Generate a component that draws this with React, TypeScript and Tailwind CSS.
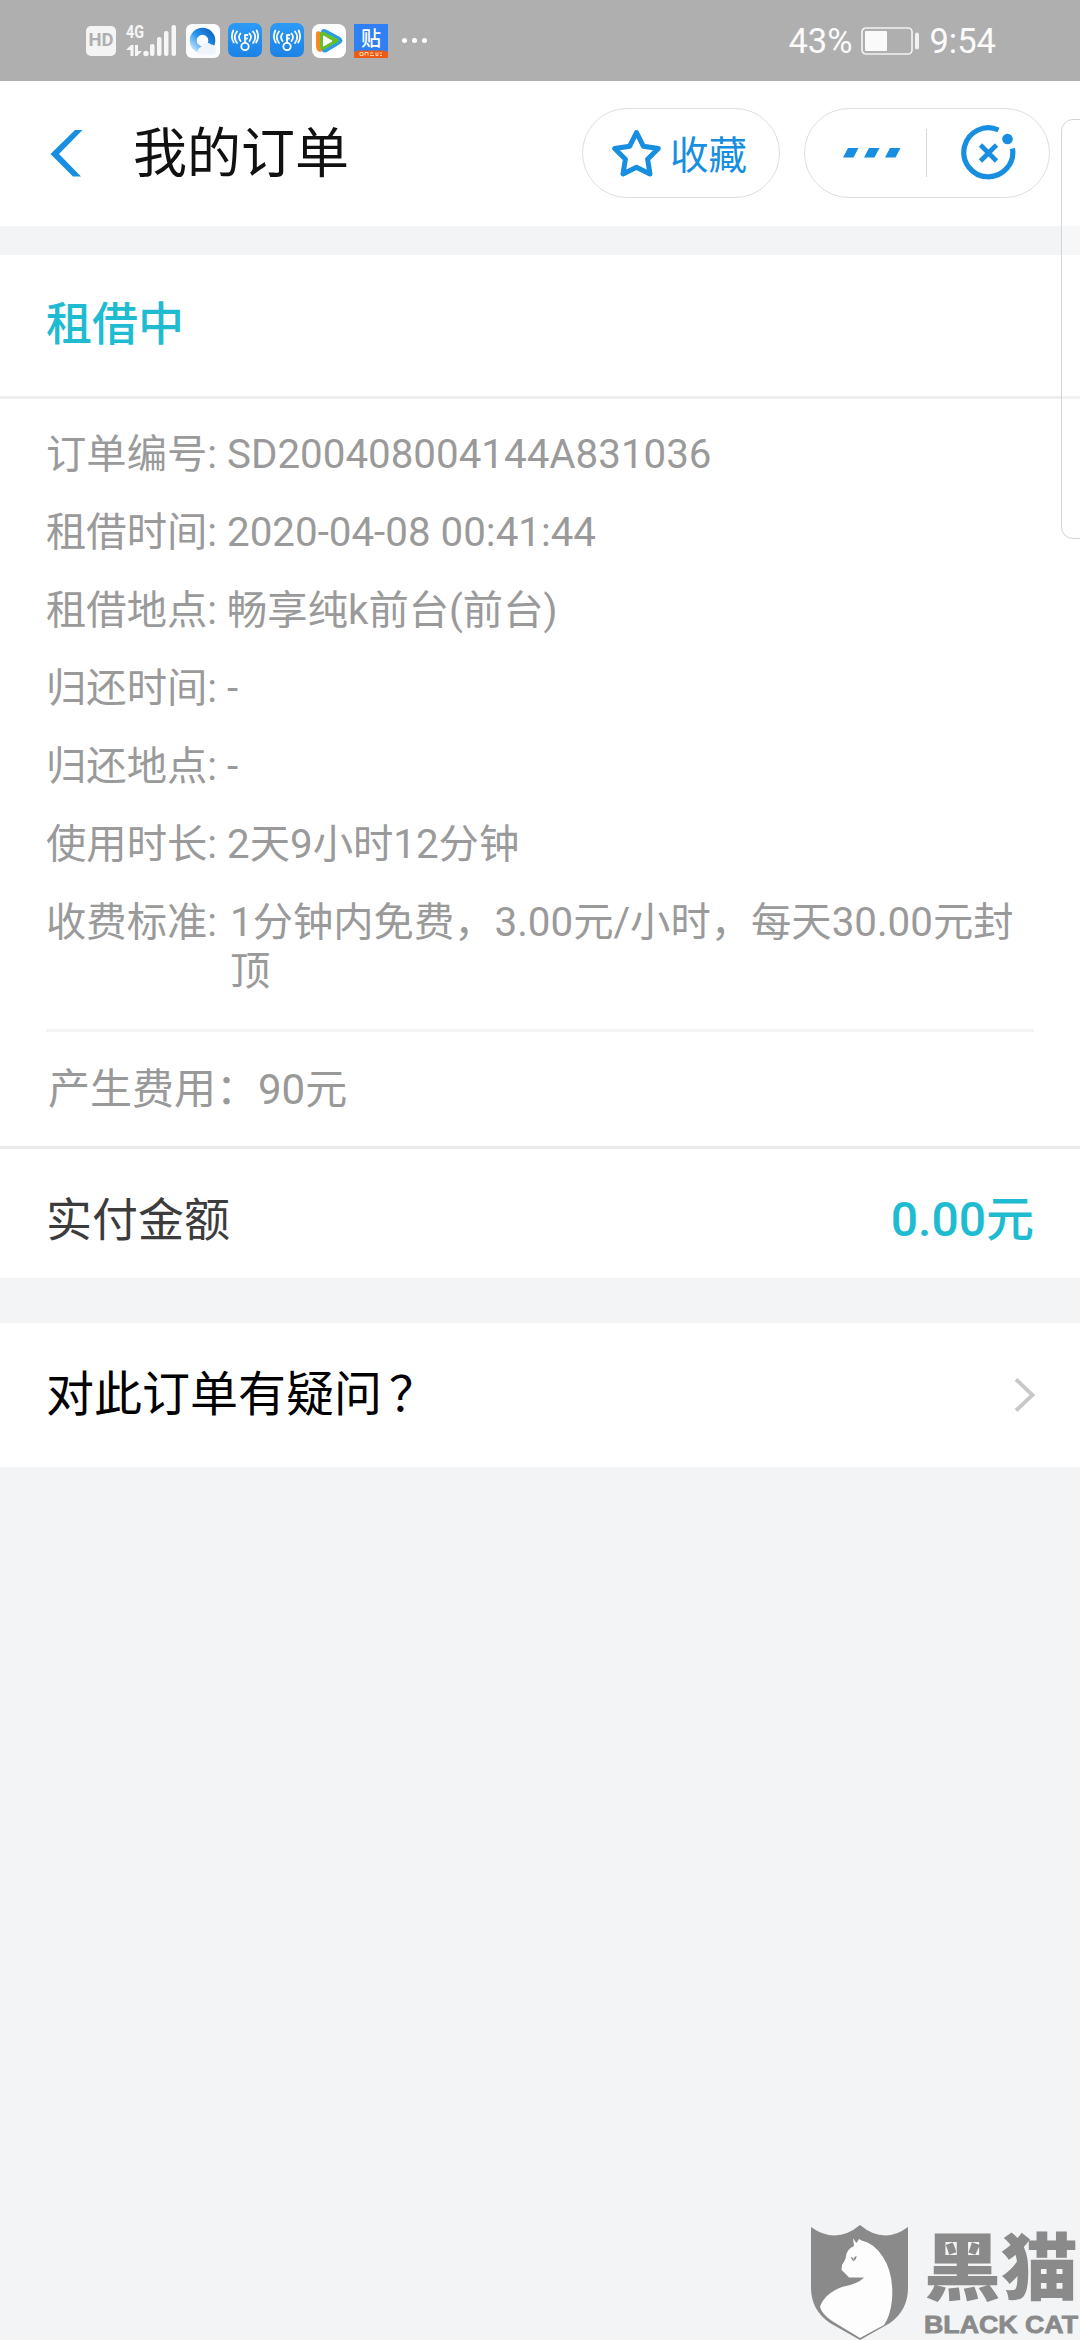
import type { ReactNode } from 'react';

const FONT = "font-['Roboto','Noto_Sans_CJK_SC',sans-serif]";

function SignalIcon() {
  return (
    <svg width="52" height="34" viewBox="0 0 52 34" fill="#f6f6f6" className="overflow-visible">
      <text x="0" y="14" fontFamily="Roboto" fontWeight="700" fontSize="18" textLength="18" lengthAdjust="spacingAndGlyphs">
        4G
      </text>
      <path d="M0 26 L5 21 H7.500 V32 H4.500 V26 Z M9 21 H12 V27 H16 L11 32 H9 Z" />
      <circle cx="20" cy="29.500" r="2.700" />
      <rect x="24" y="20" width="4.500" height="12" rx="2" />
      <rect x="31" y="13" width="4.500" height="19" rx="2" />
      <rect x="38" y="7" width="4.500" height="25" rx="2" />
      <rect x="45.500" y="1" width="4.500" height="31" rx="2" />
    </svg>
  );
}

function BrowserIcon() {
  return (
    <svg width="34" height="34" viewBox="0 0 34 34">
      <defs>
        <linearGradient id="ring" x1="1" y1="0" x2="0" y2="1">
          <stop offset="0" stopColor="#1266c4" />
          <stop offset="0.5" stopColor="#2492ee" />
          <stop offset="1" stopColor="#bfe2fb" />
        </linearGradient>
      </defs>
      <rect width="34" height="34" rx="6" fill="#fbfcfe" />
      <circle cx="16.500" cy="16.500" r="9.300" fill="none" stroke="url(#ring)" strokeWidth="7" />
      <path d="M12 30 a5 5 0 0 1 3-7 a6 6 0 0 1 10-2.500 a5 5 0 0 1 5 5 q1 4-3 5 Z" fill="#eef4fb" />
    </svg>
  );
}

function WifiKeyIcon() {
  return (
    <svg width="34" height="34" viewBox="0 0 34 34" fill="none" stroke="#fff" strokeWidth="1.800" strokeLinecap="round" className="-mt-px">
      <defs>
        <linearGradient id="wifi" x1="0" y1="0" x2="0" y2="1">
          <stop offset="0" stopColor="#2b9af5" />
          <stop offset="1" stopColor="#1c83e6" />
        </linearGradient>
      </defs>
      <rect width="34" height="34" rx="7" fill="url(#wifi)" stroke="none" />
      <circle cx="17" cy="23.500" r="3.700" />
      <path d="M17 19.500 V12 M17 12 h2.500 M17 15.500 h2" />
      <path d="M12.500 10.500 q-3 3.500 0 7.500 M9 8.500 q-4.500 5.500 0 11.500 M5.300 7.500 q-3 6.500 0.500 12" />
      <path d="M21.500 10.500 q3 3.500 0 7.500 M25 8.500 q4.500 5.500 0 11.500 M28.700 7.500 q3 6.500 -0.500 12" />
    </svg>
  );
}

function VideoIcon() {
  return (
    <svg width="34" height="34" viewBox="0 0 34 34">
      <rect width="34" height="34" rx="8" fill="#fff" />
      <path d="M4 10 Q4 6 9 8 L14 10 V25 L8 28 Q4 27 4 22 Z" fill="#f58a1f" />
      <path d="M9 7 Q10 4 14 5.500 L28 13 Q33 16.500 28 20 L14 28.500 Q11 29 10 27 Z" fill="#2b9bea" />
      <path d="M8 9 Q9 7 12 8 L26 15 Q28 17 26 18 L11 26 Q8 26 8 22 Z" fill="#67bf2b" />
      <path d="M11.500 12 L20 17 L11.500 22 Z" fill="#fff" stroke="#fff" strokeWidth="1" strokeLinejoin="round" />
    </svg>
  );
}

function TiebaIcon() {
  return (
    <svg width="34" height="34" viewBox="0 0 34 34">
      <rect width="34" height="34" fill="#2f81f3" />
      <text x="17" y="21.500" textAnchor="middle" fontFamily="'Noto Sans CJK SC'" fontWeight="500" fontSize="20" fill="#fff">
        贴
      </text>
      <path d="M0 28 L4 26.500 H30 L34 28 V34 H0 Z" fill="#ee5b16" />
      <path d="M6 28.500 h3 v3 h-3 Z M11 31.500 v-3 h3 v3 M16 29 h3 M16 31.500 h4 M22 28.500 v3 h2 v-3 M26 29 h2 M26 31.500 h2" fill="none" stroke="#ffd9a8" strokeWidth="1" />
    </svg>
  );
}

function StatusBar() {
  return (
    <header className="flex h-[81px] items-center bg-[#afafaf] pl-[86px] text-[#fbfbfb]">
      <div className="flex h-[30px] w-[30px] items-center justify-center rounded-[5px] bg-[#f4f4f4] text-[18.500px] font-bold leading-none text-[#afafaf]">
        HD
      </div>
      <div className="ml-[10px]"><SignalIcon /></div>
      <div className="ml-[8px] flex gap-[8px]">
        <BrowserIcon />
        <WifiKeyIcon />
        <WifiKeyIcon />
        <VideoIcon />
        <TiebaIcon />
      </div>
      <div className="ml-[14px] flex gap-[5px]">
        <span className="size-[5px] rounded-full bg-white" />
        <span className="size-[5px] rounded-full bg-white" />
        <span className="size-[5px] rounded-full bg-white" />
      </div>
      <div className="ml-auto flex items-center pr-[84px]">
        <span className="translate-y-px text-[34.500px] leading-none">43%</span>
        <svg className="ml-[9px]" width="60" height="28" viewBox="0 0 60 28">
          <rect x="1" y="1" width="50" height="26" rx="4" fill="none" stroke="#f2f2f2" strokeWidth="1.700" />
          <rect x="4" y="4" width="22" height="20" rx="1" fill="#fafafa" />
          <rect x="54" y="5.500" width="4" height="17" rx="2" fill="#f2f2f2" />
        </svg>
        <span className="ml-[8px] translate-y-px text-[34.500px] leading-none">9:54</span>
      </div>
    </header>
  );
}

function NavBar() {
  return (
    <nav className="flex h-[145px] items-start bg-white text-[#188ee0]">
      <svg className="ml-[50px] mt-[48px]" width="33" height="48" viewBox="0 0 33 48">
        <path d="M25 1 H32.500 L9 25 L31 47.500 H23 L0.500 25 Z" fill="#188ee0" />
      </svg>
      <h1 className="ml-[50px] mt-[34px] text-[54px] leading-[80px] text-[#111]">我的订单</h1>
      <div className="ml-auto mt-[27px] flex h-[90px] w-[198px] items-center rounded-full border border-[#dedede] pl-[28px]">
        <svg width="51" height="48" viewBox="0 0 51 48" fill="none" stroke="#188ee0" strokeWidth="5" strokeLinejoin="round">
          <path d="M25.500 3.500 L32.300 17.200 L47.300 19.500 L36.600 30.200 L39 45 L25.500 38.300 L12 45 L14.400 30.200 L3.700 19.500 L18.700 17.200 Z" />
        </svg>
        <span className="ml-[8px] pt-[5px] text-[38.500px] leading-[60px]">收藏</span>
      </div>
      <div className="ml-[24px] mr-[30px] mt-[27px] flex h-[90px] w-[246px] items-center rounded-full border border-[#dedede]">
        <svg className="ml-[38px]" width="58" height="10" viewBox="0 0 58 10" fill="#188ee0">
          <path d="M5 0 H15.500 L10.500 9.500 H0 Z M26 0 H36.500 L31.500 9.500 H21 Z M47 0 H57.500 L52.500 9.500 H42 Z" />
        </svg>
        <span className="ml-[25px] h-[48px] w-px bg-[#d8d8d8]" />
        <svg className="ml-[34px]" width="56" height="56" viewBox="0 0 56 56" fill="none" stroke="#188ee0">
          <path d="M37.500 5 A24.500 24.500 0 1 0 51.500 23.500" strokeWidth="5.200" />
          <path d="M19.500 20 L35.500 36 M35.500 20 L19.500 36" strokeWidth="4.600" />
          <circle cx="46.500" cy="14" r="5.300" fill="#188ee0" stroke="none" />
        </svg>
      </div>
    </nav>
  );
}

function DetailRow({ label, children }: { label: string; children: ReactNode }) {
  return (
    <div className="h-[78px] whitespace-pre leading-[78px]">
      {label}: {children}
    </div>
  );
}

const DETAILS: [string, string][] = [
  ['订单编号', 'SD200408004144A831036'],
  ['租借时间', '2020-04-08 00:41:44'],
  ['租借地点', '畅享纯k前台(前台)'],
  ['归还时间', '-'],
  ['归还地点', '-'],
  ['使用时长', '2天9小时12分钟'],
];

function Watermark() {
  return (
    <div className="absolute bottom-0 right-0 flex h-[116px] w-[270px] text-[#8a8a8a]">
      <svg width="100" height="116" viewBox="0 0 100 116">
        <path d="M1 3 Q26 21 50 1 Q74 21 98 3 V64 Q98 86 80 99 L50 116 L20 99 Q1 86 1 64 Z" fill="#8a8a8a" />
        <path
          d="M43 14.500 L46.500 19 L49 15 L51.500 16.500 Q64 19 73 33 Q84 50 82 76 Q80 93 74 101 L50 114 L22 97 Q12 90 10 83 Q14 70 32 63 Q48 60 54 53.500 H39 Q36 50 31.500 46 L32 41 Q36 35 36 32 Q37 25 44 22 Z"
          fill="#fdfdfd"
        />
        <path d="M40.500 33 l3 1 v4 Z M44.500 33 l2-1 q0 4-3 5 Z" fill="#8a8a8a" />
      </svg>
      <svg className="ml-[13px] overflow-visible" width="157" height="116" viewBox="0 0 157 116" fill="#8a8a8a">
        <text x="1" y="70" fontFamily="'Noto Sans CJK SC'" fontWeight="900" fontSize="73" textLength="154" lengthAdjust="spacingAndGlyphs">
          黑猫
        </text>
        <text x="1" y="109" fontFamily="'Liberation Sans'" fontWeight="700" fontSize="24" textLength="154" lengthAdjust="spacingAndGlyphs" stroke="#8a8a8a" strokeWidth="0.800">
          BLACK CAT
        </text>
      </svg>
    </div>
  );
}

export default function App() {
  return (
    <div lang="zh-CN" className={`relative h-[2340px] w-[1080px] overflow-hidden bg-[#f2f4f6] ${FONT}`}>
      <StatusBar />
      <NavBar />

      <main className="pt-[29px]">
        <section className="bg-white">
          <div className="h-[144px] border-b-[3px] border-[#eeeeee] px-[46px] pt-[29px] text-[46px] font-medium leading-[80px] text-[#1fbcd1]">
            租借中
          </div>

          <div className="mx-[46px] border-b-[3px] border-[#f3f3f3] pt-[17px] text-[40.320px] text-[#9a9a9a]">
            {DETAILS.map(([label, value]) => (
              <DetailRow key={label} label={label}>{value}</DetailRow>
            ))}
            <div className="flex h-[145px] items-start pt-[14px] leading-[49px]">
              <span className="w-[184px] shrink-0">收费标准:</span>
              <span className="-mr-[10px]">1分钟内免费，3.00元/小时，每天30.00元封顶</span>
            </div>
          </div>

          <div className="h-[117px] border-b-[3px] border-[#ebebeb] px-[48px] text-[42px] leading-[116px] text-[#999]">
            产生费用：90元
          </div>

          <div className="flex h-[129px] items-center justify-between px-[46px] pt-[13px] text-[46px]">
            <span className="leading-[80px] text-[#3c3c3c]">实付金额</span>
            <span className="text-[48px] font-medium leading-[80px] text-[#1fbcd1]">0.00元</span>
          </div>
        </section>

        <section className="mt-[45px] flex h-[144px] items-center justify-between bg-white pl-[46px] pr-[44px] text-[48px] text-black">
          <span className="leading-[80px]">对此订单有疑问<span className="ml-[7px]">？</span></span>
          <svg width="22" height="36" viewBox="0 0 22 36" fill="none" stroke="#c8c8c8" strokeWidth="3.800">
            <path d="M2 2.500 L18.500 18 L2 33.500" />
          </svg>
        </section>
      </main>

      <aside className="absolute left-[1061px] top-[119px] h-[420px] w-[30px] rounded-[12px] border border-[#d2d5d4] bg-white/25" />
      <Watermark />
    </div>
  );
}
